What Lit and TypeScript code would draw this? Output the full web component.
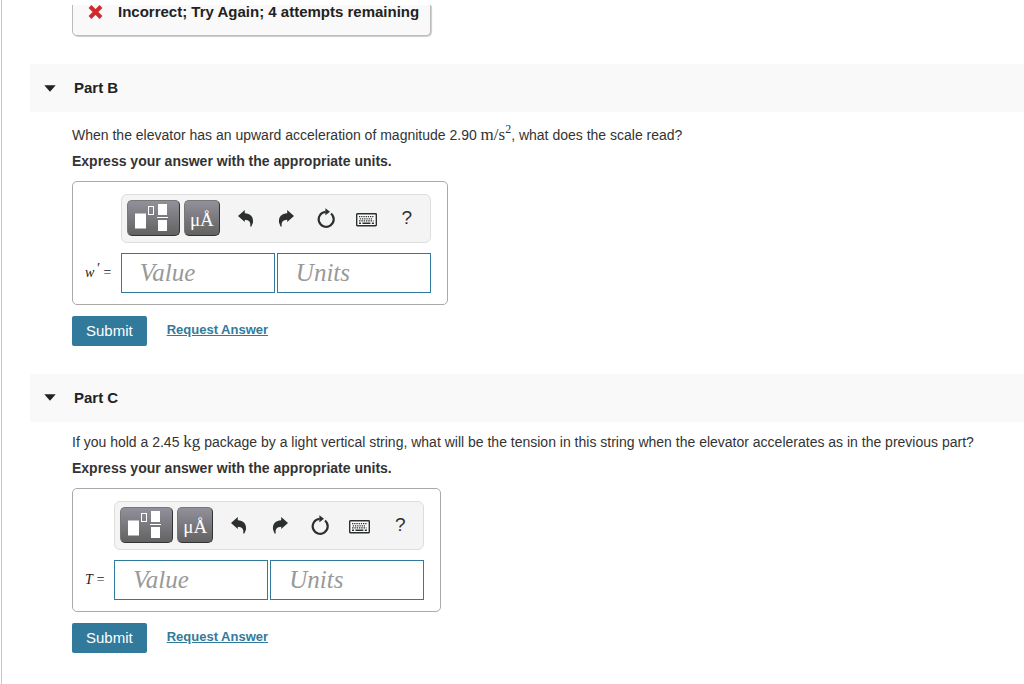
import { LitElement, html, css, svg, nothing, type TemplateResult } from "lit";
import { customElement, property, state } from "lit/decorators.js";

const undoShape = svg`<path d="M0 6 6.8 0V3.3C12.2 3.4 15.6 6.8 15 12.4L13.4 16.6H12.2C13 11.8 11 9.8 6.8 9.7V12Z"></path>`;

const undoIcon = html`<svg width="16" height="17" viewBox="0 0 16 17" fill="currentColor" aria-hidden="true">${undoShape}</svg>`;

const redoIcon = html`<svg width="16" height="17" viewBox="0 0 16 17" fill="currentColor" aria-hidden="true">
  <g transform="matrix(-1 0 0 1 16 0)">${undoShape}</g>
</svg>`;

const resetIcon = html`<svg width="18" height="20" viewBox="0 0 18 20" aria-hidden="true">
  <path d="M14 5.5A7.5 7.5 0 1 1 8.6 3.8" fill="none" stroke="currentColor" stroke-width="2.2"></path>
  <path d="M8.4 0.2 13 3.8 8.4 7.2Z" fill="currentColor"></path>
</svg>`;

const keyboardIcon = html`<svg width="21" height="18" viewBox="0 0 21 18" aria-hidden="true">
  <rect x="0.7" y="4.7" width="19.6" height="12" rx="0.6" fill="#fff" stroke="currentColor" stroke-width="1.4"></rect>
  <path d="M3 7.6H18M3.8 9.8H17" stroke="currentColor" stroke-width="1.2" stroke-dasharray="1.3 0.9"></path>
  <path d="M3 11.9H17.6" stroke="currentColor" stroke-width="1.2" stroke-dasharray="1.5 0.8"></path>
  <path d="M3 14.3H5M6.4 14.3H14.4M15.8 14.3H18" stroke="currentColor" stroke-width="1.4"></path>
</svg>`;

const templateIcon = html`<svg width="51" height="34" viewBox="0 0 51 34" aria-hidden="true">
  <rect x="7" y="12.5" width="11" height="15" fill="#fff"></rect>
  <rect x="20.5" y="5.5" width="5" height="8" fill="none" stroke="#fff"></rect>
  <rect x="30" y="3" width="9" height="11" fill="#fff"></rect>
  <rect x="29" y="16" width="11" height="1" fill="#fff"></rect>
  <rect x="30" y="19" width="9" height="11" fill="#fff"></rect>
</svg>`;

@customElement("units-answer")
class UnitsAnswer extends LitElement {
  @property() symbol = "";
  @property({ type: Boolean }) primed = false;
  @property() name = "";

  static styles = css`
    :host {
      display: block;
      width: fit-content;
    }
    .box {
      display: grid;
      grid-template-columns: auto 310px;
      column-gap: 9px;
      row-gap: 10px;
      align-items: center;
      box-sizing: border-box;
      padding: 12px 16px 11px 12px;
      border: 1px solid #aaa;
      border-radius: 5px;
      background: #fff;
    }
    .toolbar {
      grid-column: 2;
      display: flex;
      align-items: center;
      box-sizing: border-box;
      height: 49px;
      padding: 0 3px 0 5px;
      border: 1px solid #ddd;
      border-radius: 6px;
      background: #f4f4f4;
    }
    button {
      display: flex;
      align-items: center;
      justify-content: center;
      padding: 0;
      cursor: pointer;
    }
    .key {
      box-sizing: border-box;
      height: 36px;
      margin-right: 4px;
      border: 1px solid #333;
      border-top-color: #777;
      border-left-color: #777;
      border-radius: 5px;
      background: linear-gradient(#92909a, #626262);
      color: #fff;
    }
    .templates {
      width: 53px;
    }
    .symbols {
      width: 36px;
      padding-top: 3px;
      font: 19px/24px "Liberation Serif", serif;
    }
    .tools {
      display: flex;
      flex: 1;
      margin-left: 2px;
    }
    .tool {
      flex: 1;
      height: 36px;
      border: 0;
      background: none;
      color: #2c2f30;
      font: 19px/24px "Liberation Sans", sans-serif;
    }
    label {
      display: flex;
      align-items: baseline;
      gap: 3px;
      font: italic 14px/20px "Liberation Serif", serif;
      color: #222;
      white-space: nowrap;
    }
    .prime {
      margin-left: 2px;
      line-height: 0;
      vertical-align: 4px;
    }
    .fields {
      display: grid;
      grid-template-columns: 1fr 1fr;
      gap: 2px;
    }
    input {
      box-sizing: border-box;
      width: 100%;
      height: 40px;
      padding: 0 18px;
      border: 1px solid #327a9b;
      border-radius: 0;
      background: #fff;
      font: italic 25px/32px "Liberation Serif", serif;
      color: #222;
    }
    input::placeholder {
      color: #999;
      opacity: 1;
    }
  `;

  render() {
    return html`
      <div class="box">
        <div class="toolbar" role="toolbar" aria-label="Math tools">
          <button class="key templates" type="button" aria-label="Templates">${templateIcon}</button>
          <button class="key symbols" type="button" aria-label="Symbols">μÅ</button>
          <div class="tools">
            <button class="tool" type="button" aria-label="Undo">${undoIcon}</button>
            <button class="tool" type="button" aria-label="Redo">${redoIcon}</button>
            <button class="tool" type="button" aria-label="Reset">${resetIcon}</button>
            <button class="tool" type="button" aria-label="Keyboard shortcuts">${keyboardIcon}</button>
            <button class="tool" type="button" aria-label="Help">?</button>
          </div>
        </div>
        <label for="value">
          <span>${this.symbol}${this.primed ? html`<span class="prime">′</span>` : nothing}</span>
          <span>=</span>
        </label>
        <div class="fields">
          <input id="value" name=${`${this.name}-value`} type="text" placeholder="Value" />
          <input name=${`${this.name}-units`} type="text" placeholder="Units" aria-label="Units" />
        </div>
      </div>
    `;
  }
}

@customElement("question-part")
class QuestionPart extends LitElement {
  @property() heading = "";
  @property({ attribute: false }) question: TemplateResult | string = "";
  @property() symbol = "";
  @property({ type: Boolean }) primed = false;
  @state() private open = true;

  static styles = css`
    :host {
      display: block;
    }
    h2 {
      margin: 0;
      background: #f9f9f9;
    }
    .toggle {
      display: flex;
      align-items: center;
      gap: 18px;
      width: 100%;
      height: 48px;
      padding: 0 14px;
      border: 0;
      background: none;
      color: #222;
      font: bold 15px/20px "Liberation Sans", Arial, sans-serif;
      text-align: left;
      cursor: pointer;
    }
    .body {
      padding: 10px 20px 28px 42px;
    }
    p {
      margin: 0;
    }
    .question {
      margin-bottom: 6px;
    }
    .math {
      font: 17px/20px "Liberation Serif", serif;
    }
    .math sup {
      font-size: 12px;
      line-height: 14px;
    }
    .hint {
      margin-bottom: 10px;
      font-weight: bold;
    }
    .actions {
      display: flex;
      align-items: center;
      gap: 20px;
      margin-top: 11px;
    }
    .submit {
      height: 30px;
      padding: 0 14px;
      border: 0;
      border-radius: 2px;
      background: #327a9b;
      color: #fff;
      font: 15px/20px "Liberation Sans", Arial, sans-serif;
      cursor: pointer;
    }
    a {
      padding-bottom: 2px;
      color: #327a9b;
      font-size: 13px;
      font-weight: bold;
    }
  `;

  render() {
    return html`
      <h2>
        <button class="toggle" type="button" aria-expanded=${this.open} @click=${() => (this.open = !this.open)}>
          <svg width="12" height="7" viewBox="0 0 12 7" aria-hidden="true">
            <path d="M0.3 0.3H11.7L6 6.8Z" fill="#222"></path>
          </svg>
          ${this.heading}
        </button>
      </h2>
      ${this.open
        ? html`<div class="body">
            <p class="question">${this.question}</p>
            <p class="hint">Express your answer with the appropriate units.</p>
            <units-answer symbol=${this.symbol} ?primed=${this.primed} name=${this.heading}></units-answer>
            <div class="actions">
              <button class="submit" type="button">Submit</button>
              <a href="#request">Request Answer</a>
            </div>
          </div>`
        : nothing}
    `;
  }
}

@customElement("app-root")
class AppRoot extends LitElement {
  static styles = css`
    :host {
      display: block;
      box-sizing: border-box;
      min-height: 100vh;
      margin-left: 1px;
      padding: 5px 0 0 28px;
      border-left: 1px solid #c3c7dc;
      background: #fff;
      color: #333;
      font: 14px/20px "Liberation Sans", Arial, sans-serif;
    }
    .feedback {
      display: flex;
      align-items: center;
      gap: 15px;
      box-sizing: border-box;
      width: fit-content;
      height: 31px;
      margin: 0 0 28px 42px;
      padding: 0 11px 16px 15px;
      border: 1px solid #bbb;
      border-top: 0;
      border-radius: 0 0 5px 5px;
      box-shadow: 1px 1px 1px #ccc;
      background: #f9f9f9;
      color: #222;
      font-size: 15px;
      font-weight: bold;
    }
  `;

  render() {
    const acceleration = html`When the elevator has an upward acceleration of magnitude 2.90
      <span class="math">m/s<sup>2</sup></span>, what does the scale read?`;
    const tension = html`If you hold a 2.45 <span class="math">kg</span> package by a light vertical string, what will be
      the tension in this string when the elevator accelerates as in the previous part?`;
    return html`
      <div class="feedback" role="status">
        <svg width="15" height="14" viewBox="0 0 15 14" aria-hidden="true">
          <path d="M2 1.5 13 12.5M13 1.5 2 12.5" stroke="#cf2a2f" stroke-width="4"></path>
        </svg>
        <span>Incorrect; Try Again; 4 attempts remaining</span>
      </div>
      <question-part heading="Part B" .question=${acceleration} symbol="w" primed></question-part>
      <question-part heading="Part C" .question=${tension} symbol="T"></question-part>
    `;
  }
}
